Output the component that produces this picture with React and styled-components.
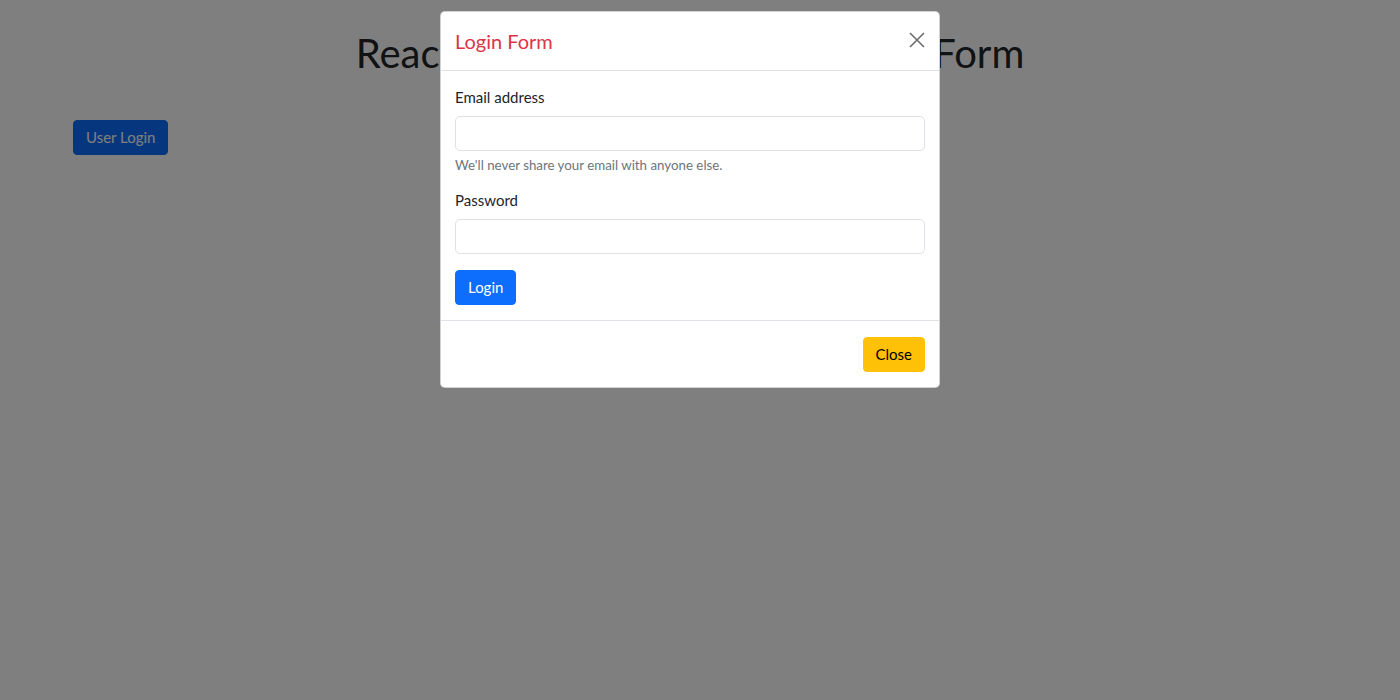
import React from "react";
import styled, { createGlobalStyle } from "styled-components";

const Global = createGlobalStyle`
  html, body { margin: 0; padding: 0; background: #fff; }
  body { font-family: Lato, "Open Sans", sans-serif; color: #212529; }
  * { box-sizing: border-box; }
`;

const Page = styled.div`
  width: 1400px;
  height: 700px;
  position: relative;
  overflow: hidden;
`;

const Main = styled.main`
  padding: 29px 93px 0 73px;
`;

const Title = styled.h1`
  margin: 0 0 43px;
  text-align: center;
  font-size: 40px;
  line-height: 48px;
  font-weight: 400;
  color: #212529;
`;

const Button = styled.button`
  font-family: inherit;
  font-size: 15px;
  line-height: 21px;
  padding: 6px 12px;
  border-radius: 4px;
  border: 1px solid ${(p) => p.$bg};
  background: ${(p) => p.$bg};
  color: ${(p) => p.$fg};
  cursor: pointer;
`;

const Backdrop = styled.div`
  position: absolute;
  inset: 0;
  background: rgba(0, 0, 0, 0.5);
  display: flex;
  justify-content: center;
  align-items: flex-start;
  padding: 11px 20px 0 0;
`;

const Dialog = styled.div`
  width: 500px;
  background: #fff;
  border: 1px solid rgba(0, 0, 0, 0.175);
  border-radius: 5px;
  display: flex;
  flex-direction: column;
`;

const Header = styled.div`
  display: flex;
  align-items: center;
  justify-content: space-between;
  padding: 14px;
  border-bottom: 1px solid #dee2e6;
`;

const ModalTitle = styled.h5`
  margin: 0;
  font-size: 20px;
  line-height: 30px;
  font-weight: 400;
  color: #dc3545;
`;

const CloseX = styled.button`
  width: 20px;
  height: 20px;
  padding: 0;
  border: 0;
  background: transparent;
  display: flex;
  align-items: center;
  justify-content: center;
  margin: 0 -2px 2px 0;
`;

const Body = styled.form`
  padding: 14px 14px 15px;
  display: flex;
  flex-direction: column;
  align-items: flex-start;
`;

const Group = styled.div`
  width: 100%;
  margin-bottom: ${(p) => p.$mb}px;
`;

const Label = styled.label`
  display: block;
  font-size: 15px;
  line-height: 24px;
  margin-bottom: 7px;
  color: #212529;
`;

const Input = styled.input`
  display: block;
  width: 100%;
  height: 35px;
  border: 1px solid #dee2e6;
  border-radius: 5px;
  padding: 6px 12px;
  font-family: inherit;
  font-size: 15px;
  background: #fff;
  outline: none;
`;

const Help = styled.div`
  margin-top: 4px;
  font-size: 13.3px;
  line-height: 20px;
  color: #6c757d;
`;

const Footer = styled.div`
  display: flex;
  justify-content: flex-end;
  padding: 16px 14px 15px;
  border-top: 1px solid #dee2e6;
`;

export default function App() {
  return (
    <>
      <Global />
      <Page>
        <Main>
          <Title>React Bootstrap Modal for Login Form</Title>
          <Button $bg="#0d6efd" $fg="#fff">User Login</Button>
        </Main>
        <Backdrop>
          <Dialog>
            <Header>
              <ModalTitle>Login Form</ModalTitle>
              <CloseX aria-label="Close">
                <svg width="16" height="16" viewBox="0 0 16 16">
                  <path d="M1 1 L15 15 M15 1 L1 15" stroke="#6c6c6c" strokeWidth="1.6" fill="none" />
                </svg>
              </CloseX>
            </Header>
            <Body onSubmit={(e) => e.preventDefault()}>
              <Group $mb={13}>
                <Label>Email address</Label>
                <Input type="email" />
                <Help>We'll never share your email with anyone else.</Help>
              </Group>
              <Group $mb={16}>
                <Label>Password</Label>
                <Input type="password" />
              </Group>
              <Button $bg="#0d6efd" $fg="#fff" type="submit">Login</Button>
            </Body>
            <Footer>
              <Button $bg="#ffc107" $fg="#000" type="button">Close</Button>
            </Footer>
          </Dialog>
        </Backdrop>
      </Page>
    </>
  );
}
